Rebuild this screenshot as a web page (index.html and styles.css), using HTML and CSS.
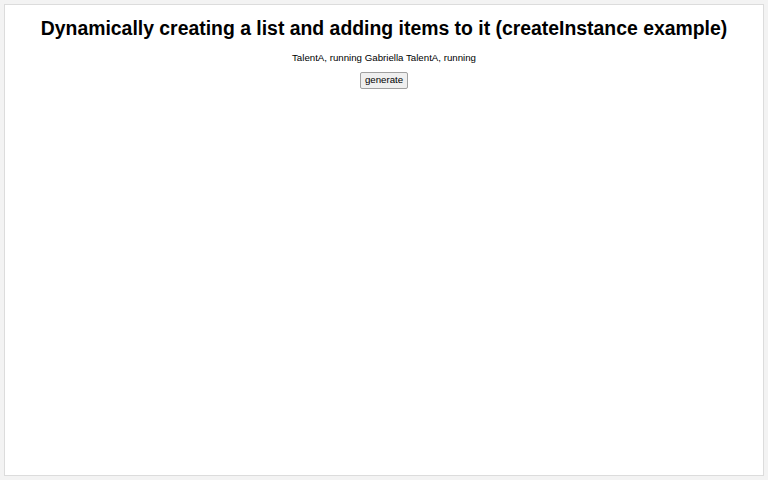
FILE: index.html
```html
<!DOCTYPE html>
<html>
<head>
<meta charset="utf-8">
<title>createInstance example</title>
<link rel="stylesheet" href="styles.css">
</head>
<body>
<div class="panel">
  <h1 class="title">Dynamically creating a list and adding items to it (createInstance example)</h1>
  <div class="list">TalentA, running Gabriella TalentA, running</div>
  <div class="actions"><button class="btn" type="button">generate</button></div>
</div>
</body>
</html>
```

FILE: styles.css
```css
html, body {
  margin: 0;
  padding: 0;
  height: 100%;
}
body {
  background: #f3f3f3;
  padding: 4px;
  box-sizing: border-box;
  font-family: "Liberation Sans", Arial, sans-serif;
  color: #000;
}
.panel {
  background: #fff;
  border: 1px solid #dcdcdc;
  height: 100%;
  box-sizing: border-box;
  text-align: center;
  padding-top: 13px;
}
.title {
  margin: 0;
  font-size: 19.4px;
  font-weight: bold;
  line-height: 20px;
}
.list {
  margin-top: 14px;
  font-size: 9.7px;
  line-height: 12px;
}
.actions {
  margin-top: 5px;
}
.btn {
  font-family: "Liberation Sans", Arial, sans-serif;
  font-size: 9.7px;
  line-height: 12px;
  padding: 1px 4px 2px;
  margin: 0;
  background: #efefef;
  border: 1px solid #a0a0a0;
  border-radius: 2px;
  color: #000;
}
```
